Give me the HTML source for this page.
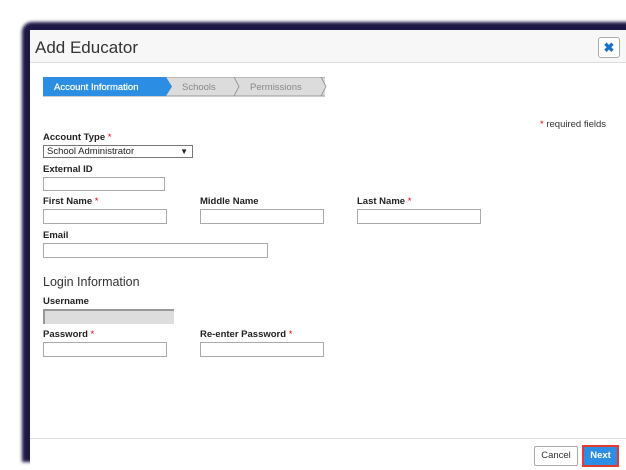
<!DOCTYPE html>
<html><head><style>
*{box-sizing:border-box;margin:0;padding:0}
body{width:626px;height:470px;background:#fff;position:relative;overflow:hidden;font-family:"Liberation Sans",Arial,sans-serif;color:#222}
.shadow{position:absolute;left:22px;top:22px;width:630px;height:440px;background:#1c1744;border-radius:10px 10px 0 0;filter:blur(1.5px)}
.dlg{position:absolute;left:30px;top:30px;width:600px;height:440px;background:#fff}
.hdr{position:absolute;left:30px;top:30px;width:596px;height:33px;background:#f7f7f7;border-bottom:1px solid #ddd}
.t{position:absolute;white-space:nowrap}
.lbl{position:absolute;font-size:9.5px;font-weight:bold;color:#222;white-space:nowrap}
.lbl b{color:#e00;font-weight:normal}
.in{position:absolute;height:15px;border:1px solid #aaa;background:#fff}
</style></head><body>
<div class="shadow"></div>
<div class="dlg"></div>
<div class="hdr"></div>
<div class="t" style="left:35px;top:38px;font-size:17px;color:#333">Add Educator</div>
<div style="position:absolute;left:598px;top:37px;width:22px;height:21px;border:1px solid #aaa;border-radius:3px;background:#fff;color:#1a6fc9;font-size:13px;font-weight:bold;text-align:center;line-height:19px">✖</div>
<svg style="position:absolute;left:43px;top:77px" width="285" height="20">
<rect x="0" y="0" width="282" height="19" fill="#dcdcdc"/>
<line x1="0" y1="19" x2="282" y2="19" stroke="#999"/>
<line x1="0" y1="0" x2="282" y2="0" stroke="#999"/>
<polygon points="0,0 123,0 129,9.5 123,19 0,19" fill="#2b8ee2"/>
<polyline points="191,0 196,9.5 191,19" fill="none" stroke="#999"/>
<polyline points="278,0 283,9.5 278,19" fill="none" stroke="#999"/>
<text x="11" y="13" font-size="9.5" fill="#fff" font-family="Liberation Sans" stroke="#fff" stroke-width="0.2">Account Information</text>
<text x="139" y="13" font-size="9.5" fill="#888" font-family="Liberation Sans">Schools</text>
<text x="207" y="13" font-size="9.5" fill="#888" font-family="Liberation Sans">Permissions</text>
</svg>
<div class="t" style="left:540px;top:119px;font-size:9.5px;color:#333"><span style="color:#e00">*</span> required fields</div>
<div class="lbl" style="left:43px;top:132px">Account Type <b>*</b></div>
<div style="position:absolute;left:43px;top:145px;width:150px;height:13px;border:1px solid #777;font-size:9.5px;padding-left:3px;line-height:11px">School Administrator<span style="position:absolute;right:4px;font-size:8px">▼</span></div>
<div class="lbl" style="left:43px;top:164px">External ID</div>
<div class="in" style="left:43px;top:177px;width:122px;height:14px"></div>
<div class="lbl" style="left:43px;top:196px">First Name <b>*</b></div>
<div class="in" style="left:43px;top:209px;width:124px"></div>
<div class="lbl" style="left:200px;top:196px">Middle Name</div>
<div class="in" style="left:200px;top:209px;width:124px"></div>
<div class="lbl" style="left:357px;top:196px">Last Name <b>*</b></div>
<div class="in" style="left:357px;top:209px;width:124px"></div>
<div class="lbl" style="left:43px;top:230px">Email</div>
<div class="in" style="left:43px;top:243px;width:225px"></div>
<div class="t" style="left:43px;top:275px;font-size:12.5px;color:#333">Login Information</div>
<div class="lbl" style="left:43px;top:296px">Username</div>
<div style="position:absolute;left:43px;top:309px;width:131px;height:15px;background:#ddd;border-top:2px solid #999;border-left:2px solid #999"></div>
<div class="lbl" style="left:43px;top:329px">Password <b>*</b></div>
<div class="in" style="left:43px;top:342px;width:124px"></div>
<div class="lbl" style="left:200px;top:329px">Re-enter Password <b>*</b></div>
<div class="in" style="left:200px;top:342px;width:124px"></div>
<div style="position:absolute;left:30px;top:438px;width:596px;height:1px;background:#ddd"></div>
<div style="position:absolute;left:534px;top:446px;width:44px;height:20px;border:1px solid #aaa;border-radius:2px;font-size:9.5px;color:#333;text-align:center;line-height:18px">Cancel</div>
<div style="position:absolute;left:582px;top:445px;width:37px;height:22px;border:2px solid #e53a32;background:#2b8ee2;color:#fff;font-size:9.5px;font-weight:bold;text-align:center;line-height:18px">Next</div>
</body></html>
